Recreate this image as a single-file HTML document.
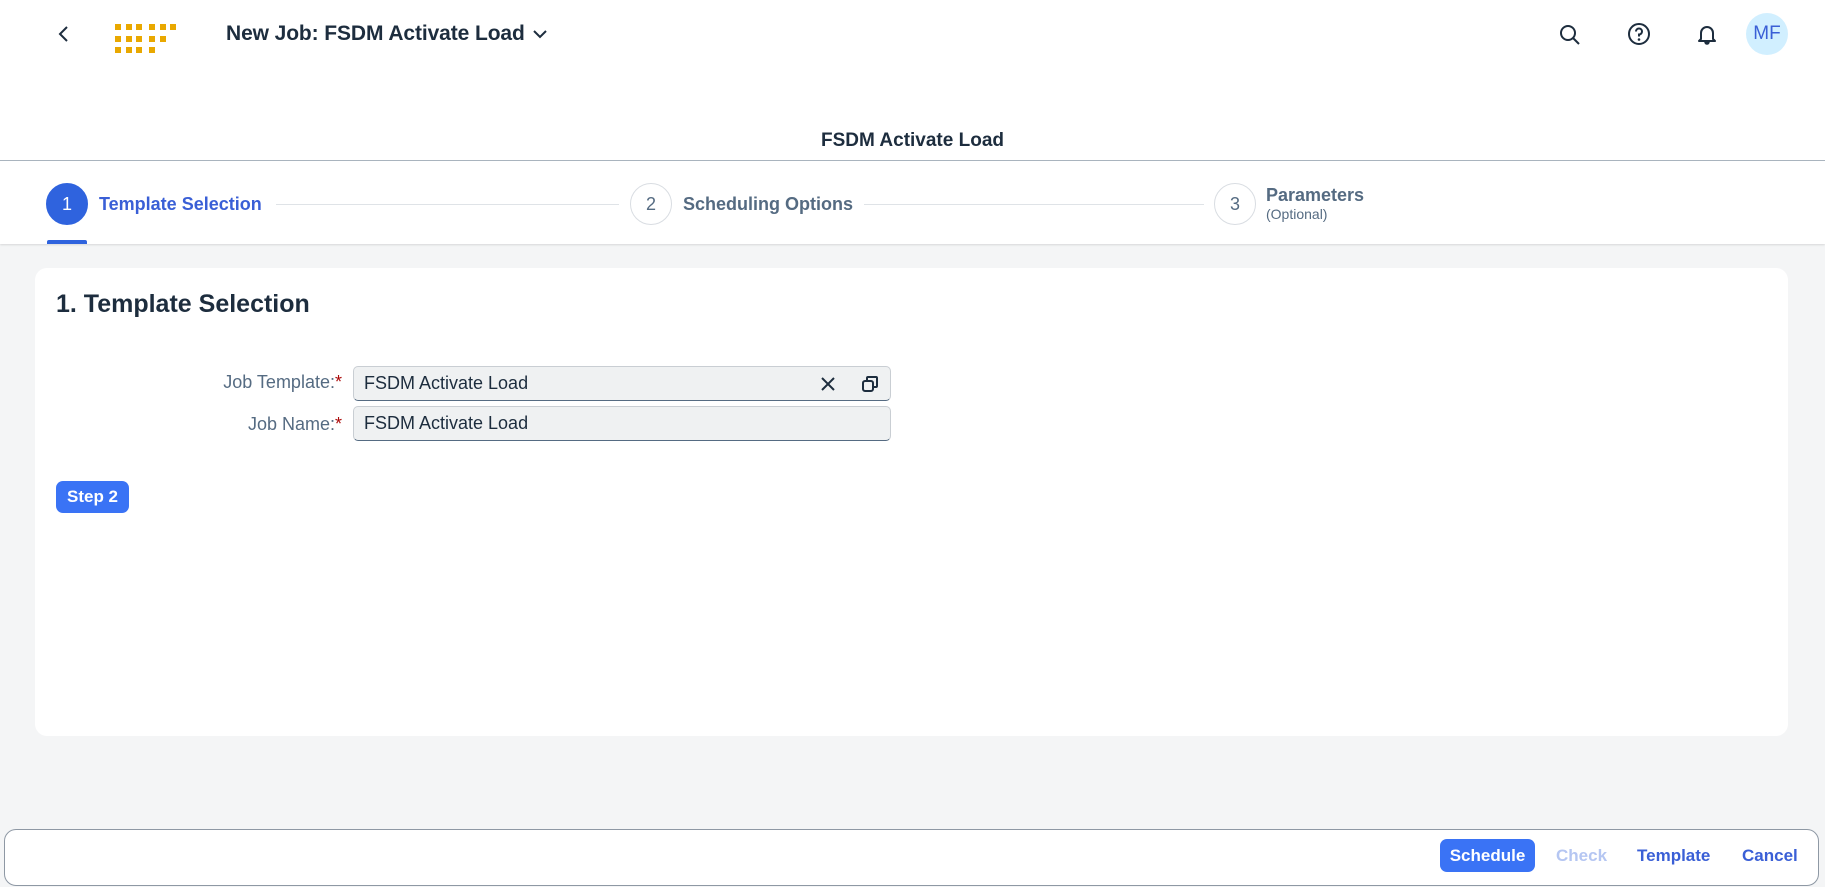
<!DOCTYPE html>
<html><head><meta charset="utf-8"><style>
*{box-sizing:border-box;margin:0;padding:0}
body{width:1825px;height:887px;overflow:hidden;background:#f4f5f6;font-family:"Liberation Sans",sans-serif;color:#1d2d3e;position:relative}
.abs{position:absolute}
.top{left:0;top:0;width:1825px;height:244px;background:#fff;box-shadow:0 1px 2px rgba(0,0,0,.12)}
.dot{position:absolute;width:6px;height:6px;background:#e9a800}
.circ{position:absolute;width:42px;height:42px;border-radius:50%;border:1px solid #d9dde2;background:#fff;color:#556b82;font-size:18px;text-align:center;line-height:40px}
.lbl{font-size:18px;font-weight:bold;color:#556b82}
.inp{position:absolute;left:353px;width:538px;height:35px;background:#eff1f2;border:1px solid #c9ced3;border-bottom:1px solid #556b82;border-radius:5px;font-size:18px;padding-left:10px;line-height:33px}
.fl{position:absolute;font-size:18px;color:#556b82;text-align:right;width:320px;left:22px}
.fl b{color:#aa0808;font-weight:normal}
</style></head><body>
<div class="abs top"></div>
<svg class="abs" style="left:56px;top:25px" width="16" height="18" viewBox="0 0 16 18"><path d="M11 2 L4 9 L11 16" fill="none" stroke="#1d2d3e" stroke-width="2"/></svg>
<div class="dot" style="left:115px;top:24px"></div><div class="dot" style="left:126px;top:24px"></div><div class="dot" style="left:136px;top:24px"></div><div class="dot" style="left:149px;top:24px"></div><div class="dot" style="left:160px;top:24px"></div><div class="dot" style="left:170px;top:24px"></div>
<div class="dot" style="left:115px;top:36px"></div><div class="dot" style="left:126px;top:36px"></div><div class="dot" style="left:136px;top:36px"></div><div class="dot" style="left:149px;top:36px"></div><div class="dot" style="left:160px;top:36px"></div>
<div class="dot" style="left:115px;top:47px"></div><div class="dot" style="left:126px;top:47px"></div><div class="dot" style="left:136px;top:47px"></div><div class="dot" style="left:149px;top:47px"></div>
<div class="abs" style="left:226px;top:22px;font-size:21px;font-weight:bold;letter-spacing:-0.1px">New Job: FSDM Activate Load</div>
<svg class="abs" style="left:532px;top:28px" width="16" height="12"><path d="M2 3 L8 9 L14 3" fill="none" stroke="#1d2d3e" stroke-width="2"/></svg>
<svg class="abs" style="left:1558px;top:23px" width="24" height="24"><circle cx="10" cy="10" r="7" fill="none" stroke="#1d2d3e" stroke-width="2"/><path d="M15 15 L21 21" stroke="#1d2d3e" stroke-width="2"/></svg>
<svg class="abs" style="left:1627px;top:22px" width="24" height="24"><circle cx="12" cy="12" r="10" fill="none" stroke="#1d2d3e" stroke-width="2"/><path d="M9 9.5 A3 3 0 1 1 12 12.5 L12 14.5" fill="none" stroke="#1d2d3e" stroke-width="2"/><circle cx="12" cy="17.5" r="1.3" fill="#1d2d3e"/></svg>
<svg class="abs" style="left:1695px;top:22px" width="24" height="24"><path d="M6 17 L6 11 A6 6 0 0 1 18 11 L18 17 L20 19 L4 19 Z" fill="none" stroke="#1d2d3e" stroke-width="2" stroke-linejoin="round"/><path d="M10 20 A2 2 0 0 0 14 20" fill="#1d2d3e" stroke="#1d2d3e" stroke-width="1.5"/></svg>
<div class="abs" style="left:1746px;top:13px;width:42px;height:42px;border-radius:50%;background:#d1efff;font-size:19px;text-align:center;line-height:42px;color:#3a5fd6">MF</div>
<div class="abs" style="left:0;top:130px;width:1825px;text-align:center;font-size:19px;font-weight:bold">FSDM Activate Load</div>
<div class="abs" style="left:0;top:160px;width:1825px;height:1px;background:#a9b4be"></div>
<div class="circ" style="left:46px;top:183px;background:#2f63de;border-color:#2f63de;color:#fff">1</div>
<div class="abs lbl" style="left:99px;top:194px;color:#3a5fd6">Template Selection</div>
<div class="abs" style="left:276px;top:204px;width:343px;height:1px;background:#dfe3e7"></div>
<div class="circ" style="left:630px;top:183px">2</div>
<div class="abs lbl" style="left:683px;top:194px">Scheduling Options</div>
<div class="abs" style="left:864px;top:204px;width:340px;height:1px;background:#dfe3e7"></div>
<div class="circ" style="left:1214px;top:183px">3</div>
<div class="abs lbl" style="left:1266px;top:185px">Parameters</div>
<div class="abs" style="left:1266px;top:206px;font-size:14px;color:#556b82">(Optional)</div>
<div class="abs" style="left:47px;top:240px;width:40px;height:4px;background:#2f63de;border-radius:2px 2px 0 0"></div>
<div class="abs" style="left:35px;top:268px;width:1753px;height:468px;background:#fff;border-radius:12px"></div>
<div class="abs" style="left:56px;top:290px;font-size:25px;font-weight:bold">1. Template Selection</div>
<div class="fl" style="top:372px">Job Template:<b>*</b></div>
<div class="inp" style="top:366px">FSDM Activate Load
<svg class="abs" style="left:466px;top:9px" width="16" height="16"><path d="M2 2 L14 14 M14 2 L2 14" stroke="#1d2d3e" stroke-width="2"/></svg>
<svg class="abs" style="left:507px;top:8px" width="18" height="18"><rect x="2" y="6" width="10" height="10" rx="2" fill="none" stroke="#1d2d3e" stroke-width="2"/><path d="M6 6 V3 A1 1 0 0 1 7 2 H15 A1 1 0 0 1 16 3 V11 A1 1 0 0 1 15 12 H12" fill="none" stroke="#1d2d3e" stroke-width="2"/></svg>
</div>
<div class="fl" style="top:414px">Job Name:<b>*</b></div>
<div class="inp" style="top:406px">FSDM Activate Load</div>
<div class="abs" style="left:56px;top:481px;width:73px;height:32px;background:#3a73f5;border-radius:7px;color:#fff;font-weight:bold;font-size:17px;text-align:center;line-height:32px">Step 2</div>
<div class="abs" style="left:4px;top:829px;width:1815px;height:57px;background:#fff;border:1px solid #8e98a4;border-radius:12px"></div>
<div class="abs" style="left:1440px;top:839px;width:95px;height:33px;background:#3a73f5;border-radius:7px;color:#fff;font-weight:bold;font-size:17px;text-align:center;line-height:33px">Schedule</div>
<div class="abs" style="left:1556px;top:846px;font-size:17px;font-weight:bold;color:#b5c6f2">Check</div>
<div class="abs" style="left:1637px;top:846px;font-size:17px;font-weight:bold;color:#3a5fd6">Template</div>
<div class="abs" style="left:1742px;top:846px;font-size:17px;font-weight:bold;color:#3a5fd6">Cancel</div>
</body></html>
